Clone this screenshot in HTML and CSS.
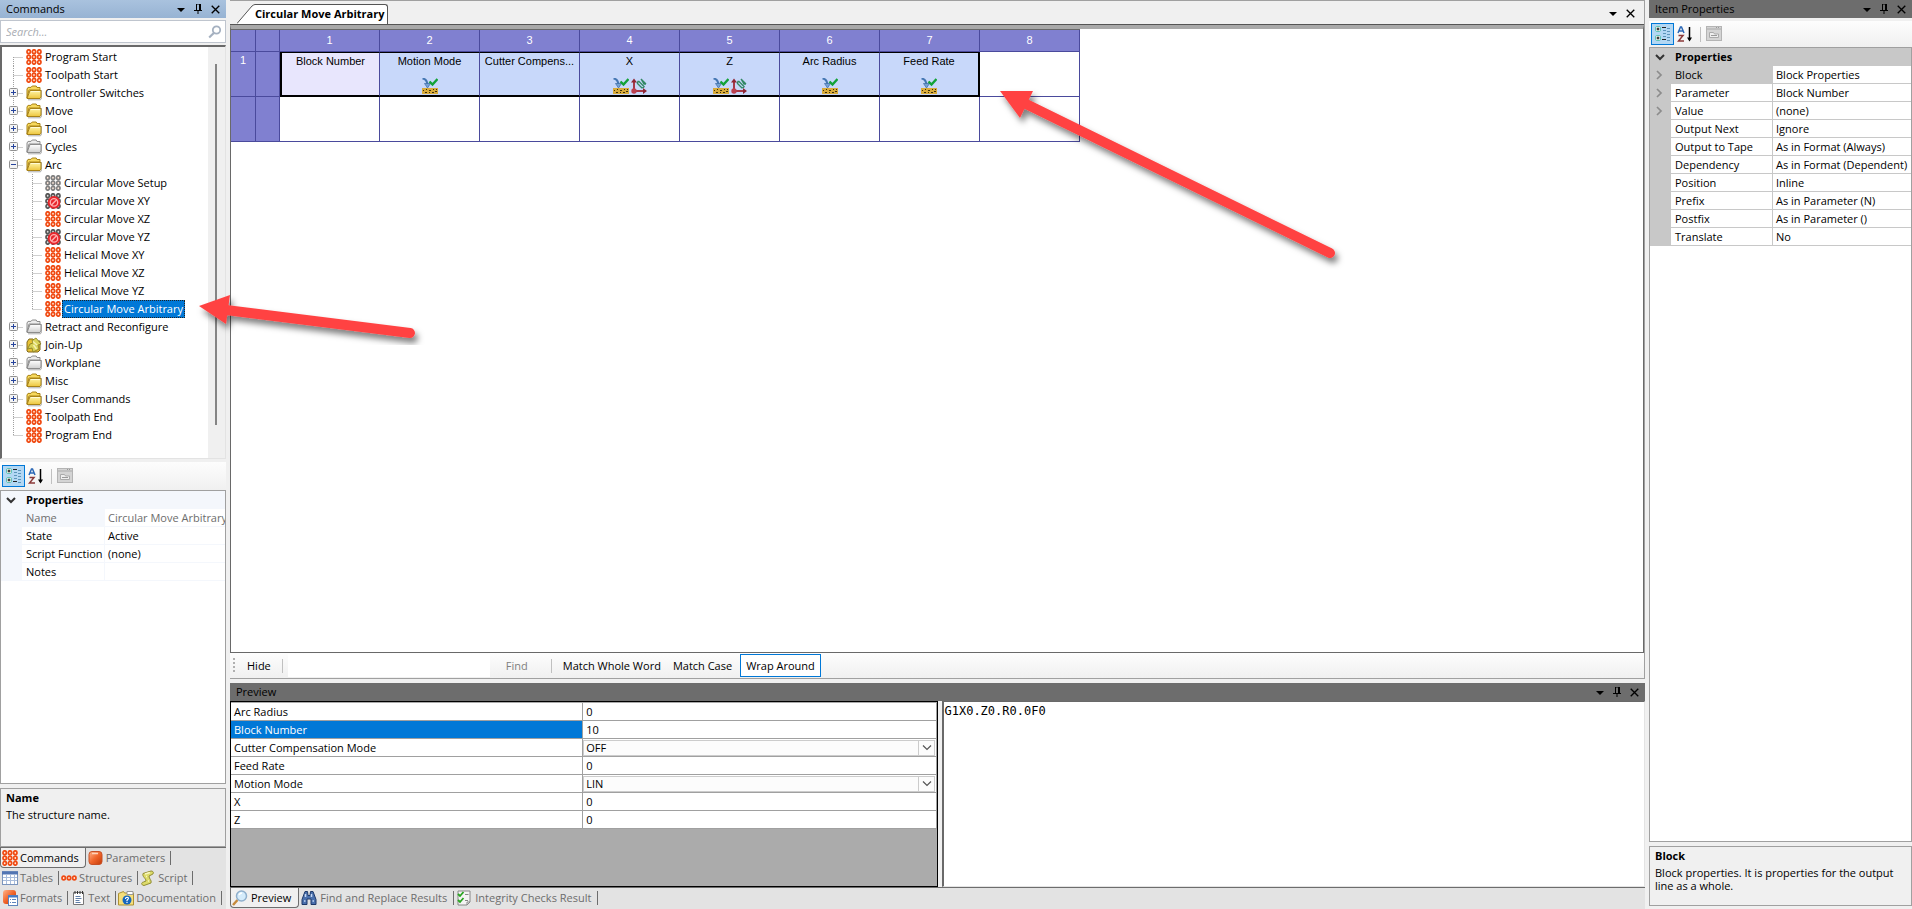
FILE: index.html
```html
<!DOCTYPE html>
<html lang="en">
<head>
<meta charset="utf-8">
<title>Circular Move Arbitrary</title>
<link rel="stylesheet" href="styles.css">
</head>
<body>
<svg class="defs" aria-hidden="true">
  <defs>
    <linearGradient id="gold" x1="0" y1="0" x2="0" y2="1"><stop offset="0" stop-color="#fff6a8"/><stop offset="1" stop-color="#edc53c"/></linearGradient>
    <linearGradient id="silver" x1="0" y1="0" x2="0" y2="1"><stop offset="0" stop-color="#ffffff"/><stop offset="1" stop-color="#cfcfcf"/></linearGradient>
    <linearGradient id="cube" x1="0" y1="0" x2="1" y2="1"><stop offset="0" stop-color="#ffb48a"/><stop offset=".5" stop-color="#f0642a"/><stop offset="1" stop-color="#c23a08"/></linearGradient>
    <filter id="shade" x="-10%" y="-20%" width="120%" height="150%"><feDropShadow dx="3" dy="5" stdDeviation="3" flood-color="#000" flood-opacity=".5"/></filter>
    <g id="dots3"><ellipse cx="2.7" cy="2.7" rx="1.7" ry="1.9"/><ellipse cx="8" cy="2.7" rx="1.7" ry="1.9"/><ellipse cx="13.3" cy="2.7" rx="1.7" ry="1.9"/></g>
    <symbol id="dots" viewBox="0 0 16 16"><g fill="#ffe9dc" stroke="currentColor" stroke-width="1.7"><use href="#dots3"/><use href="#dots3" y="5.3"/><use href="#dots3" y="10.6"/></g></symbol>
    <symbol id="row3" viewBox="0 0 16 16"><g fill="#ffe9dc" stroke="#f04a12" stroke-width="1.7"><use href="#dots3" y="5.3"/></g></symbol>
    <symbol id="banned" viewBox="0 0 16 16"><g fill="#ddd" stroke="#555" stroke-width="1.7"><use href="#dots3"/><use href="#dots3" y="5.3"/><use href="#dots3" y="10.6"/></g><circle cx="9" cy="9.4" r="6.3" fill="#e8262c"/><circle cx="9" cy="9.4" r="3.7" fill="none" stroke="#ffb0b0" stroke-width="1.3"/><path d="M6.4 12 11.6 6.8" stroke="#ffb0b0" stroke-width="1.5"/></symbol>
    <symbol id="folder" viewBox="0 0 16 16"><path d="M2 14.8h12.5l1.2-2V5" fill="none" stroke="#777" stroke-width="1" opacity=".6"/><path d="M1 13V4l1-1.6h3L6.200 1h4l.8 1.500h3V5l-11 0z" fill="#f7d95c" stroke="#a98316"/><path d="M1 13.500 4 5.500h11v6.500l-1 1.500z" fill="url(#gold)" stroke="#a98316"/><path d="M4.800 6.500h9" stroke="#fffbd6"/></symbol>
    <symbol id="folder-off" viewBox="0 0 16 16"><path d="M2 14.8h12.5l1.2-2V5" fill="none" stroke="#777" stroke-width="1" opacity=".6"/><path d="M1 13V4l1-1.6h3L6.200 1h4l.8 1.500h3V5l-11 0z" fill="#ececec" stroke="#8c8c8c"/><path d="M1 13.500 4 5.500h11v6.500l-1 1.500z" fill="url(#silver)" stroke="#8c8c8c"/></symbol>
    <symbol id="join" viewBox="0 0 16 16"><path d="M1 14V5l2-3h4l2 2h5v9l-2 2H2z" fill="#e9c236" stroke="#80691c"/><path d="M1.500 12 4 7l3-1-1-2.500L10 1l5 6-3 1 1 4-6 3-1-4z" fill="#d9d35a" stroke="#837a22" stroke-width=".8"/><path d="m7 4.500 4 3.500M7.500 8l3 4" stroke="#f6f3b4" stroke-width="1.500"/></symbol>
    <symbol id="t-line" viewBox="0 0 19 18"><path d="M9.500 0v18" class="dot"/></symbol>
    <symbol id="t-first" viewBox="0 0 19 18"><path d="M9.500 9v9M9.500 9.500H20" class="dot"/></symbol>
    <symbol id="t-mid" viewBox="0 0 19 18"><path d="M9.500 0v18M9.500 9.500H20" class="dot"/></symbol>
    <symbol id="t-last" viewBox="0 0 19 18"><path d="M9.500 0v9M9.500 9.500H20" class="dot"/></symbol>
    <symbol id="t-plus" viewBox="0 0 19 18"><path d="M9.500 0v18M9.500 9.500H20" class="dot"/><rect x="5.500" y="4.500" width="8" height="8" rx="1" fill="#f4f4f4" stroke="#919191"/><path d="M7 8.500h5M9.500 6v5" stroke="#26449c"/></symbol>
    <symbol id="t-minus" viewBox="0 0 19 18"><path d="M9.500 0v18M9.500 9.500H20" class="dot"/><rect x="5.500" y="4.500" width="8" height="8" rx="1" fill="#f4f4f4" stroke="#919191"/><path d="M7 8.500h5" stroke="#26449c"/></symbol>
    <symbol id="caret" viewBox="0 0 8 10"><path d="M0 4h8L4 8z" fill="#000"/></symbol>
    <symbol id="pin" viewBox="0 0 8 10"><path d="M2 0h4.500v6M2.500 0v6M5.500 0v6M0 6.500h8M4 6v4" fill="none" stroke="#000"/></symbol>
    <symbol id="close" viewBox="0 0 10 10"><path d="m.8.8 8.400 8.400M9.200.8.8 9.200" stroke="#000" stroke-width="1.500"/></symbol>
    <symbol id="lens" viewBox="0 0 14 14"><circle cx="8.500" cy="5" r="3.700" fill="#fff" stroke="#a5b1c1" stroke-width="1.800"/><path d="M5.800 8 1.200 12.500" stroke="#a5b1c1" stroke-width="2.200"/></symbol>
    <symbol id="cat" viewBox="0 0 18 18"><g stroke="#5fc2b4" fill="#fff"><rect x="1.500" y="1.500" width="5" height="5" rx="1.500"/><rect x="1.500" y="10.500" width="5" height="5" rx="1.500"/></g><path d="M2.500 4h3M4 2.500v3M2.500 13h3M4 11.500v3" stroke="#000"/><path d="M8 2.500h4M8 14.500h4" stroke="#222"/><path d="M9 5.500h3M9 8.500h3M9 11.500h3M13 3.500h3M13 6.500h3M13 9.500h3M13 12.500h3M13 15.500h3" stroke="#5d94ba"/></symbol>
    <symbol id="sort" viewBox="0 0 16 16"><path d="m1 7 2.500-6h1L7 7M2 5h4" fill="none" stroke="#2c68b6" stroke-width="1.500"/><path d="M1.500 9.500h4.500L1.500 15H7" fill="none" stroke="#8b3a3a" stroke-width="1.500"/><path d="M12.500 1v13" stroke="#000" stroke-width="1.500"/><path d="M10 11.500h5l-2.500 4z"/></symbol>
    <symbol id="pages" viewBox="0 0 16 16"><rect x=".5" y=".5" width="15" height="14" fill="#d4d4d4" stroke="#b4b4b4"/><path d="M1 3h14" stroke="#aaa"/><path d="M3.500 11.500v-5h4l1 1.500h4v3.500z" fill="#eee" stroke="#aaa"/><path d="M5 9.500h6M10 1.500h1M12 1.500h1" stroke="#999"/></symbol>
    <symbol id="down" viewBox="0 0 10 8"><path d="m1 2 4 4 4-4" fill="none" stroke="currentColor" stroke-width="2"/></symbol>
    <symbol id="thin-down" viewBox="0 0 10 8"><path d="m1 2 4 4 4-4" fill="none" stroke="currentColor" stroke-width="1.200"/></symbol>
    <symbol id="right" viewBox="0 0 8 10"><path d="m2 1 4 4-4 4" fill="none" stroke="#8c8c8c" stroke-width="1.700"/></symbol>
    <symbol id="parameter" viewBox="0 0 16 16"><rect x="1" y="1.500" width="13" height="13" rx="3" fill="url(#cube)" stroke="#c75026"/><path d="M4 3.500h6" stroke="#ffd3b8" stroke-width="1.500"/></symbol>
    <symbol id="grid" viewBox="0 0 16 16"><rect x=".5" y="1.500" width="15" height="13" fill="#fff" stroke="#7b95bd"/><path d="M0 3h16" stroke="#5275b3" stroke-width="3"/><path d="M1 7.500h14M1 10.500h14M4.500 4v10M8.500 4v10M12.500 4v10" stroke="#a9bddb"/></symbol>
    <symbol id="scroll" viewBox="0 0 16 16"><path d="M3 3.500 11 1c3 0 3 3 1 3.500L9 6c0 3 3 4 2 7l-7 2.500c-3-.5-3-3-.5-3.500L6 11C6 8 2 7 3 3.500z" fill="#dddb6a" stroke="#918c34"/><path d="m5 4 5-1.500M6 6.500h1M8 11h1" stroke="#f9f7bd" stroke-width="1.500"/></symbol>
    <symbol id="format" viewBox="0 0 16 16"><rect x="1" y="0" width="13" height="14" rx="3" fill="url(#cube)"/><rect x="6.500" y="5.500" width="9" height="10" fill="#fff" stroke="#5e85bd"/><path d="M6 6.500h10" stroke="#4779c4" stroke-width="2"/><path d="M8 9.500h1M10 9.500h4M8 12.500h1M10 12.500h4" stroke="#5e85bd"/></symbol>
    <symbol id="note" viewBox="0 0 16 16"><path d="M3.500 2.500h10v12h-10z" fill="#fff" stroke="#777"/><path d="M5 1v3M7.500 1v3M10 1v3M12.500 1v3" stroke="#333"/><path d="M5.500 6.500h5M5.500 8.500h6M5.500 10.500h4M5.500 12.500h5" stroke="#5f7ea8"/></symbol>
    <symbol id="book" viewBox="0 0 16 16"><path d="M.5 15V3.500l5-2 1 1.500h9v12z" fill="#f6df7b" stroke="#ad9133"/><path d="M9 1.500h6v3H9z" fill="#fff" stroke="#999"/><circle cx="9" cy="10" r="4.500" fill="#1667bf"/><path d="M7.500 9c0-2.500 3.500-2 2.800-.2L9 10.300v1M9 12v1" fill="none" stroke="#fff" stroke-width="1.200"/></symbol>
    <symbol id="magnify" viewBox="0 0 16 16"><path d="M5.500 10 1 15" stroke="#c68b3c" stroke-width="2.500"/><circle cx="9.500" cy="6" r="5" fill="#d5ecfb" stroke="#8fafcc" stroke-width="1.500"/><path d="M7 5c1-2 2-2 3-2" fill="none" stroke="#fff" stroke-width="1.500"/></symbol>
    <symbol id="binoc" viewBox="0 0 16 16"><path d="M4 1.500h2.500l.5 4h2l.5-4H12l3 8v5h-5V9H6v5.500H1v-5z" fill="#4a70ad" stroke="#1e3969"/><path d="M3 11h1.500M11.500 11H13M4.500 4v3M10.500 4v3" stroke="#c5d8f4" stroke-width="1.500"/></symbol>
    <symbol id="checks" viewBox="0 0 16 16"><path d="M2 1h12v11l-3 3H2z" fill="#f4f4f4" stroke="#888"/><path d="m2 4 2 2 3.500-4M2 10l2 2 3.500-4" fill="none" stroke="#28a41f" stroke-width="1.800"/><path d="M9 4.500h3.500M9 10.500h3M11 15v-3h3" fill="none" stroke="#888"/></symbol>
    <symbol id="tape" viewBox="0 0 16 16"><path d="M0 10h16v6H0z" fill="#d8ab3a"/><path d="M1 12.500h1M4 11.500h1M3 14.500h2M7 12.500h2M7 14.500h1M10 14.500h2M11 11.500h1M13 13.500h2M14 11.500h1" stroke="#3e300b"/><path d="M.5.500C4.500 1 5.500 4 5.500 8" fill="none" stroke="#4476b2" stroke-width="2"/><path d="M2.500 5.500h6l-3 4.500z" fill="#76a2d2" stroke="#3b6aa5" stroke-width=".7"/><path d="m7.500 3.500 3 3 5-5.500" fill="none" stroke="#12a237" stroke-width="2.400"/></symbol>
    <symbol id="axes" viewBox="0 0 16 16"><path d="M3 3v10h10" fill="none" stroke="#a63b49" stroke-width="2"/><path d="M0 4.500 3 .500l3 4zM12 10l4 3-4 3z" fill="#8f2634"/><circle cx="3" cy="13" r="2.700" fill="#bc4050"/><path d="m6 5 5 5M7.500 3l6 6M10 1l5 5M6 5l1.500-2M11 10l2.500-1M10 1l3 5 2 0" fill="none" stroke="#328864" stroke-width="1.300"/></symbol>
  </defs>
</svg>

<div class="app">
  <aside class="side left">
    <header class="caption active"><h2>Commands</h2>
      <button aria-label="Menu"><svg width="8" height="10"><use href="#caret"/></svg></button><button aria-label="Pin"><svg width="8" height="10"><use href="#pin"/></svg></button><button aria-label="Close"><svg width="9" height="9"><use href="#close"/></svg></button></header>
    <div class="search"><input type="search" placeholder="Search..." aria-label="Search"><svg width="14" height="14"><use href="#lens"/></svg></div>
    <div class="tree">
      <ul>
        <li><svg class="tw"><use href="#t-first"/></svg><svg class="ic hot"><use href="#dots"/></svg><span>Program Start</span></li>
        <li><svg class="tw"><use href="#t-mid"/></svg><svg class="ic hot"><use href="#dots"/></svg><span>Toolpath Start</span></li>
        <li><svg class="tw"><use href="#t-plus"/></svg><svg class="ic"><use href="#folder"/></svg><span>Controller Switches</span></li>
        <li><svg class="tw"><use href="#t-plus"/></svg><svg class="ic"><use href="#folder"/></svg><span>Move</span></li>
        <li><svg class="tw"><use href="#t-plus"/></svg><svg class="ic"><use href="#folder"/></svg><span>Tool</span></li>
        <li><svg class="tw"><use href="#t-plus"/></svg><svg class="ic"><use href="#folder-off"/></svg><span>Cycles</span></li>
        <li><svg class="tw"><use href="#t-minus"/></svg><svg class="ic"><use href="#folder"/></svg><span>Arc</span></li>
        <li><svg class="tw"><use href="#t-line"/></svg><svg class="tw"><use href="#t-mid"/></svg><svg class="ic off"><use href="#dots"/></svg><span>Circular Move Setup</span></li>
        <li><svg class="tw"><use href="#t-line"/></svg><svg class="tw"><use href="#t-mid"/></svg><svg class="ic"><use href="#banned"/></svg><span>Circular Move XY</span></li>
        <li><svg class="tw"><use href="#t-line"/></svg><svg class="tw"><use href="#t-mid"/></svg><svg class="ic hot"><use href="#dots"/></svg><span>Circular Move XZ</span></li>
        <li><svg class="tw"><use href="#t-line"/></svg><svg class="tw"><use href="#t-mid"/></svg><svg class="ic"><use href="#banned"/></svg><span>Circular Move YZ</span></li>
        <li><svg class="tw"><use href="#t-line"/></svg><svg class="tw"><use href="#t-mid"/></svg><svg class="ic hot"><use href="#dots"/></svg><span>Helical Move XY</span></li>
        <li><svg class="tw"><use href="#t-line"/></svg><svg class="tw"><use href="#t-mid"/></svg><svg class="ic hot"><use href="#dots"/></svg><span>Helical Move XZ</span></li>
        <li><svg class="tw"><use href="#t-line"/></svg><svg class="tw"><use href="#t-mid"/></svg><svg class="ic hot"><use href="#dots"/></svg><span>Helical Move YZ</span></li>
        <li><svg class="tw"><use href="#t-line"/></svg><svg class="tw"><use href="#t-last"/></svg><svg class="ic hot"><use href="#dots"/></svg><span class="picked">Circular Move Arbitrary</span></li>
        <li><svg class="tw"><use href="#t-plus"/></svg><svg class="ic"><use href="#folder-off"/></svg><span>Retract and Reconfigure</span></li>
        <li><svg class="tw"><use href="#t-plus"/></svg><svg class="ic"><use href="#join"/></svg><span>Join-Up</span></li>
        <li><svg class="tw"><use href="#t-plus"/></svg><svg class="ic"><use href="#folder-off"/></svg><span>Workplane</span></li>
        <li><svg class="tw"><use href="#t-plus"/></svg><svg class="ic"><use href="#folder"/></svg><span>Misc</span></li>
        <li><svg class="tw"><use href="#t-plus"/></svg><svg class="ic"><use href="#folder"/></svg><span>User Commands</span></li>
        <li><svg class="tw"><use href="#t-mid"/></svg><svg class="ic hot"><use href="#dots"/></svg><span>Toolpath End</span></li>
        <li><svg class="tw"><use href="#t-last"/></svg><svg class="ic hot"><use href="#dots"/></svg><span>Program End</span></li>
      </ul>
      <div class="track"><div class="thumb"></div></div>
    </div>
    <div class="tools"><button class="on" aria-label="Categorized"><svg width="18" height="18"><use href="#cat"/></svg></button><button aria-label="Alphabetical"><svg width="16" height="16"><use href="#sort"/></svg></button><i></i><button aria-label="Property pages" disabled><svg width="16" height="16"><use href="#pages"/></svg></button></div>
    <div class="props pale">
      <table>
        <colgroup><col class="p0"><col class="p1"><col></colgroup>
        <tr class="group"><td><svg width="10" height="8"><use href="#down"/></svg></td><th colspan="2">Properties</th></tr>
        <tr class="current dim"><td></td><th>Name</th><td>Circular Move Arbitrary</td></tr>
        <tr><td></td><th>State</th><td>Active</td></tr>
        <tr><td></td><th>Script Function</th><td>(none)</td></tr>
        <tr><td></td><th>Notes</th><td></td></tr>
      </table>
    </div>
    <div class="help"><h3>Name</h3><p>The structure name.</p></div>
    <nav class="tabs">
      <div><button class="sel"><svg class="hot"><use href="#dots"/></svg>Commands</button><button><svg><use href="#parameter"/></svg>Parameters</button></div>
      <div><button><svg><use href="#grid"/></svg>Tables</button><button><svg><use href="#row3"/></svg>Structures</button><button><svg><use href="#scroll"/></svg>Script</button></div>
      <div><button><svg><use href="#format"/></svg>Formats</button><button><svg><use href="#note"/></svg>Text</button><button><svg><use href="#book"/></svg>Documentation</button></div>
    </nav>
  </aside>

  <main class="center">
    <section class="doc">
      <div class="doctabs">
        <button class="doctab"><svg width="18" height="20"><path d="M0 20 15 2q2-1.500 3-1.500V20z" fill="#fff"/><path d="M0 19.500 15 2q2-1.500 3-1.500" fill="none" stroke="#555"/></svg><span>Circular Move Arbitrary</span></button>
        <div class="acts"><button aria-label="Documents"><svg width="8" height="10"><use href="#caret"/></svg></button><button aria-label="Close document"><svg width="9" height="9"><use href="#close"/></svg></button></div>
      </div>
      <div class="canvas">
        <table class="sheet">
          <colgroup><col class="c0"><col class="c1"><col span="8"></colgroup>
          <tr><th></th><th></th><th>1</th><th>2</th><th>3</th><th>4</th><th>5</th><th>6</th><th>7</th><th>8</th></tr>
          <tr class="line"><th>1</th><th></th>
            <td class="s first"><div>Block Number</div></td>
            <td class="s"><div>Motion Mode<p><svg><use href="#tape"/></svg></p></div></td>
            <td class="s"><div>Cutter Compens...</div></td>
            <td class="s"><div>X<p><svg><use href="#tape"/></svg><svg><use href="#axes"/></svg></p></div></td>
            <td class="s"><div>Z<p><svg><use href="#tape"/></svg><svg><use href="#axes"/></svg></p></div></td>
            <td class="s"><div>Arc Radius<p><svg><use href="#tape"/></svg></p></div></td>
            <td class="s last"><div>Feed Rate<p><svg><use href="#tape"/></svg></p></div></td>
            <td></td></tr>
          <tr class="line"><th></th><th></th><td></td><td></td><td></td><td></td><td></td><td></td><td></td><td></td></tr>
        </table>
      </div>
      <div class="find"><span class="grip"></span><button>Hide</button><i></i><input type="text" aria-label="Find text"><button class="go" disabled>Find</button><i></i><button>Match Whole Word</button><button>Match Case</button><button class="on">Wrap Around</button></div>
    </section>
    <section class="preview">
      <header class="caption"><h2>Preview</h2>
        <button aria-label="Menu"><svg width="8" height="10"><use href="#caret"/></svg></button><button aria-label="Pin"><svg width="8" height="10"><use href="#pin"/></svg></button><button aria-label="Close"><svg width="9" height="9"><use href="#close"/></svg></button></header>
      <div class="split">
        <div class="values">
          <table>
            <tr><th>Arc Radius</th><td>0</td></tr>
            <tr class="picked"><th>Block Number</th><td>10</td></tr>
            <tr><th><label for="ccm">Cutter Compensation Mode</label></th><td class="combo"><select id="ccm"><option>OFF</option></select><svg><use href="#thin-down"/></svg></td></tr>
            <tr><th>Feed Rate</th><td>0</td></tr>
            <tr><th><label for="mm">Motion Mode</label></th><td class="combo"><select id="mm"><option>LIN</option></select><svg><use href="#thin-down"/></svg></td></tr>
            <tr><th>X</th><td>0</td></tr>
            <tr><th>Z</th><td>0</td></tr>
          </table>
        </div>
        <textarea aria-label="Output" spellcheck="false">G1X0.Z0.R0.0F0</textarea>
      </div>
      <nav class="tabs"><div><button class="sel"><svg><use href="#magnify"/></svg>Preview</button><button><svg><use href="#binoc"/></svg>Find and Replace Results</button><button><svg><use href="#checks"/></svg>Integrity Checks Result</button></div></nav>
    </section>
  </main>

  <aside class="side right">
    <header class="caption"><h2>Item Properties</h2>
      <button aria-label="Menu"><svg width="8" height="10"><use href="#caret"/></svg></button><button aria-label="Pin"><svg width="8" height="10"><use href="#pin"/></svg></button><button aria-label="Close"><svg width="9" height="9"><use href="#close"/></svg></button></header>
    <div class="tools"><button class="on" aria-label="Categorized"><svg width="18" height="18"><use href="#cat"/></svg></button><button aria-label="Alphabetical"><svg width="16" height="16"><use href="#sort"/></svg></button><i></i><button aria-label="Property pages" disabled><svg width="16" height="16"><use href="#pages"/></svg></button></div>
    <div class="props">
      <table>
        <colgroup><col class="p0"><col class="p1"><col></colgroup>
        <tr class="group"><td><svg width="10" height="8"><use href="#down"/></svg></td><th colspan="2">Properties</th></tr>
        <tr class="current"><td><svg width="8" height="10"><use href="#right"/></svg></td><th>Block</th><td>Block Properties</td></tr>
        <tr><td><svg width="8" height="10"><use href="#right"/></svg></td><th>Parameter</th><td>Block Number</td></tr>
        <tr><td><svg width="8" height="10"><use href="#right"/></svg></td><th>Value</th><td>(none)</td></tr>
        <tr><td></td><th>Output Next</th><td>Ignore</td></tr>
        <tr><td></td><th>Output to Tape</th><td>As in Format (Always)</td></tr>
        <tr><td></td><th>Dependency</th><td>As in Format (Dependent)</td></tr>
        <tr><td></td><th>Position</th><td>Inline</td></tr>
        <tr><td></td><th>Prefix</th><td>As in Parameter (N)</td></tr>
        <tr><td></td><th>Postfix</th><td>As in Parameter ()</td></tr>
        <tr><td></td><th>Translate</th><td>No</td></tr>
      </table>
    </div>
    <div class="help"><h3>Block</h3><p>Block properties. It is properties for the output line as a whole.</p></div>
  </aside>
</div>

<svg class="marks" width="1400" height="400" aria-hidden="true">
  <g fill="#ff4343" stroke="#ff4343" filter="url(#shade)"><path d="M199 306 230 295 226 324z" stroke="none"/><path d="M226 310 410 333" stroke-width="10" stroke-linecap="round"/></g>
  <g fill="#ff4343" stroke="#ff4343" filter="url(#shade)"><path d="M1000 91h33l-13 27z" stroke="none"/><path d="M1024 103 1330 253" stroke-width="10" stroke-linecap="round"/></g>
</svg>
</body>
</html>
```
FILE: styles.css
```css
* { box-sizing: border-box; }
body { margin: 0; background: #f0f0f0; color: #000; font: 11px/18px "Open Sans", "Noto Sans", sans-serif; }
h2, h3, p, ul { margin: 0; padding: 0; font-size: 11px; }
h2, p { font-weight: 400; }
button { border: 0; padding: 0; margin: 0; background: none; font: inherit; color: inherit; }
svg { display: block; flex: none; }
table { border-spacing: 0; border-collapse: separate; table-layout: fixed; }
td, th { padding: 0; font-weight: 400; text-align: left; white-space: nowrap; overflow: hidden; }
.defs { position: absolute; width: 0; height: 0; }
.dot { fill: none; stroke: #a0a0a0; stroke-dasharray: 1 1; }
.hot { color: #f04a12; }
.off { color: #808080; }

.app { display: grid; grid-template-columns: 226px minmax(0, 1fr) 263px; column-gap: 4px; height: 100vh; }
.side, .center, .doc, .preview { display: flex; flex-direction: column; min-height: 0; min-width: 0; }

.caption { display: flex; align-items: center; gap: 9px; height: 18px; padding: 0 6px 0 6px; background: #6d6d6d; }
.caption.active { background: linear-gradient(#a9c2de, #97b3d3); }
.caption h2 { flex: 1; font-size: 11px; }

.search { display: flex; align-items: center; height: 23px; margin: 2px 0; padding: 0 3px 0 5px; border: 1px solid #bfc5ce; background: #fff; }
.search input { flex: 1; min-width: 0; border: 0; padding: 0; outline: 0; background: none; font: italic 11px "Open Sans", sans-serif; }
.search input::placeholder { color: #a9adb3; }

.tree { display: flex; flex: none; height: 414px; border: 1px solid #e3e3e3; border-top: 2px solid #696969; border-left: 2px solid #696969; background: #fff; }
.tree ul { flex: 1; padding: 1px 0 0 2px; list-style: none; }
.tree li { display: flex; align-items: center; height: 18px; }
.tree .tw { width: 19px; height: 18px; }
.tree .ic { width: 16px; height: 16px; margin: 0 1px 0 3px; }
.tree span { padding: 0 2px; white-space: nowrap; }
.tree .picked { background: #0078d7; color: #fff; outline: 1px dotted #222; outline-offset: -1px; }
.track { width: 17px; padding: 17px 0 33px 7px; background: #f0f0f0; }
.thumb { width: 2px; height: 100%; background: #858585; }

.tools { display: flex; align-items: center; gap: 3px; height: 28px; margin-top: 3px; padding: 0 2px; background: linear-gradient(#fdfdfd, #f0f0f0); }
.tools button { display: grid; place-items: center; height: 22px; }
.tools .on { width: 23px; background: #b3d7f3; border: 1px solid #0078d7; }
.tools i { width: 1px; height: 15px; margin: 0 2px 0 4px; background: #c0c0c0; }

.props { flex: 1; min-height: 0; border: 1px solid #a0a0a0; background: #fff; --line: #c8c8c8; --name: 102px; }
.pale { --line: #f4f7fc; --name: 83px; }
.props table { width: 100%; }
.p0 { width: 21px; }
.p1 { width: var(--name); }
.props tr { height: 18px; }
.props td, .props th { height: 18px; line-height: 17px; border-bottom: 1px solid var(--line); padding-left: 3px; }
.props th { padding-left: 4px; border-right: 1px solid var(--line); }
.props td:first-child { padding-left: 5px; background: var(--line); }
.props .group th { background: var(--line); font-weight: 700; }
.props .group td { color: #333; }
.props .current th { background: var(--line); }
.pale th { padding-right: 0; }
.dim { color: #6d6d6d; }
.help { height: 60px; margin-top: 4px; padding: 1px 5px; border: 1px solid #a0a0a0; line-height: 13px; }
.help h3 { font-weight: 700; line-height: 16px; }
.help p { padding-top: 2px; }
.left .help { flex: none; height: 59px; }
.right .tools { height: 26px; margin-top: 3px; }
.right .help { margin-bottom: 3px; }

.tabs { flex: none; border-top: 1px solid #6d6d6d; padding-bottom: 1px; background: #e3e3e3; color: #6d6d6d; }
.tabs div { display: flex; height: 20px; }
.tabs button { display: flex; align-items: center; gap: 3px; height: 20px; padding: 0 7px 0 2px; white-space: nowrap; background: linear-gradient(#6d6d6d, #6d6d6d) right center / 1px 14px no-repeat; }
.left .tabs button { padding-right: 6px; gap: 2px; }
.tabs svg { width: 16px; height: 16px; }
.tabs button.sel { background: #f0f0f0; color: #000; border: 1px solid #6d6d6d; border-top: 0; border-radius: 0 0 4px 4px; padding-left: 1px; }

.doc { flex: 1; border: 1px solid #a0a0a0; border-width: 1px 1px 1px 0; }
.doctabs { display: flex; justify-content: space-between; align-items: flex-end; height: 24px; padding-left: 7px; border-bottom: 1px solid #555; }
.doctab { display: flex; height: 20px; }
.doctab span { height: 20px; padding: 0 3px 0 0; border: 1px solid #555; border-width: 1px 1px 0 0; border-radius: 0 3px 0 0; background: #fff; font-weight: 700; line-height: 17px; }
.acts { display: flex; align-items: center; gap: 9px; padding: 0 9px 6px; }
.canvas { flex: 1; border-top: 4px solid #a9a9a9; border-left: 1px solid #696969; border-bottom: 1px solid #696969; border-right: 1px solid #696969; background: #fff; }
.sheet { width: 849px; border-top: 1px solid #696969; font: 11px/14px "Liberation Sans", Arial, sans-serif; }
.c0 { width: 25px; }
.c1 { width: 24px; }
.sheet th { height: 22px; padding-bottom: 1px; background: #8080d0; color: #fff; border: solid #4a4a9c; border-width: 0 1px 1px 0; text-align: center; }
.sheet td { border: solid #4a4a9c; border-width: 0 1px 1px 0; vertical-align: top; text-align: center; }
.sheet .line th, .sheet .line td { height: 45px; }
.sheet .line th { padding-top: 1px; vertical-align: top; }
.sheet .s { background: #c8d8fa; border-top: 1px solid #000; border-bottom: 2px solid #000; }
.sheet .first { background: #e8e6fd; border-left: 2px solid #000; }
.sheet .last { border-right: 2px solid #000; }
.sheet td div { display: flex; flex-direction: column; justify-content: space-between; height: 41px; padding-top: 1px; }
.sheet p { display: flex; justify-content: center; gap: 2px; }
.sheet p svg { width: 16px; height: 16px; }

.find { display: flex; align-items: center; height: 25px; padding-left: 3px; background: linear-gradient(#fdfdfd, #f0f0f0); }
.find button { height: 23px; padding: 0 5px; border: 1px solid transparent; line-height: 20px; }
.find .on { margin-left: 2px; border-color: #0078d7; background: #fff; }
.find .go { margin: 0 12px 0 10px; color: #808080; }
.find i { width: 1px; height: 14px; margin: 0 5px; background: #c0c0c0; }
.find input { flex: 0 0 202px; min-width: 0; height: 23px; border: 0; background: #fff; }
.grip { width: 2px; height: 15px; margin-right: 6px; background: repeating-linear-gradient(#b0b0b0 0 2px, transparent 2px 4px); }

.preview { height: 226px; flex: none; margin-top: 4px; }
.split { display: grid; grid-template-columns: 50% minmax(0, 1fr); column-gap: 4px; flex: 1; min-height: 0; }
.values { border: 1px solid #000; background: #ababab; padding: 1px 0 0; }
.values table { width: 100%; background: #fff; border-right: 1px solid #a0a0a0; }
.values th, .values td { height: 18px; line-height: 17px; padding-left: 3px; border-bottom: 1px solid #a0a0a0; }
.values th { width: 50%; border-right: 1px solid #a0a0a0; }
.values .picked th { background: #0078d7; color: #fff; }
.values .combo { position: relative; padding: 0 1px 0 0; }
.combo select { display: block; width: 100%; height: 16px; padding: 0 0 0 2px; appearance: none; border: 1px solid #ccc; border-radius: 0; background: #fcfcfc; font: inherit; line-height: 14px; color: #000; }
.combo svg { position: absolute; right: 1px; top: 1px; width: 17px; height: 15px; padding: 3px; border-left: 1px solid #ccc; color: #555; pointer-events: none; }
.split textarea { border: 1px solid #e3e3e3; border-top-color: #696969; border-left: 2px solid #696969; padding: 2px 1px; resize: none; outline: 0; background: #fff; font: 12px/15px "DejaVu Sans Mono", monospace; color: #000; }

.marks { position: absolute; left: 0; top: 0; pointer-events: none; }
```
